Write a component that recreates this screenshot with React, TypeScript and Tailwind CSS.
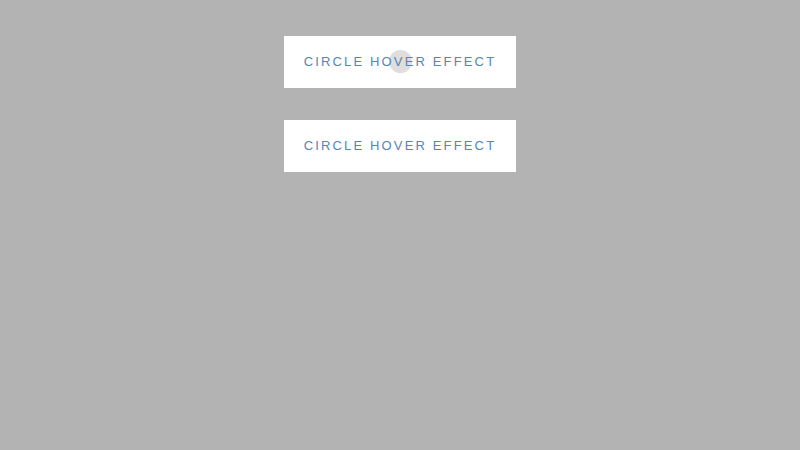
export default function App() {
  return (
    <div className="min-h-[450px] w-full bg-[#b3b3b3] flex flex-col items-center pt-9 gap-8" style={{ fontFamily: '"Liberation Sans", Arial, sans-serif' }}>
      <button className="relative w-[232px] h-[52px] bg-white flex items-center justify-center overflow-hidden">
        <span className="absolute left-[105px] top-[14px] w-[23px] h-[23px] rounded-full bg-[#dedede]" />
        <span className="relative text-[13px] tracking-[2.15px] text-[#5685b8]">CIRCLE HOVER EFFECT</span>
      </button>
      <button className="relative w-[232px] h-[52px] bg-white flex items-center justify-center">
        <span className="relative text-[13px] tracking-[2.15px] text-[#5685b8]">CIRCLE HOVER EFFECT</span>
      </button>
    </div>
  );
}
